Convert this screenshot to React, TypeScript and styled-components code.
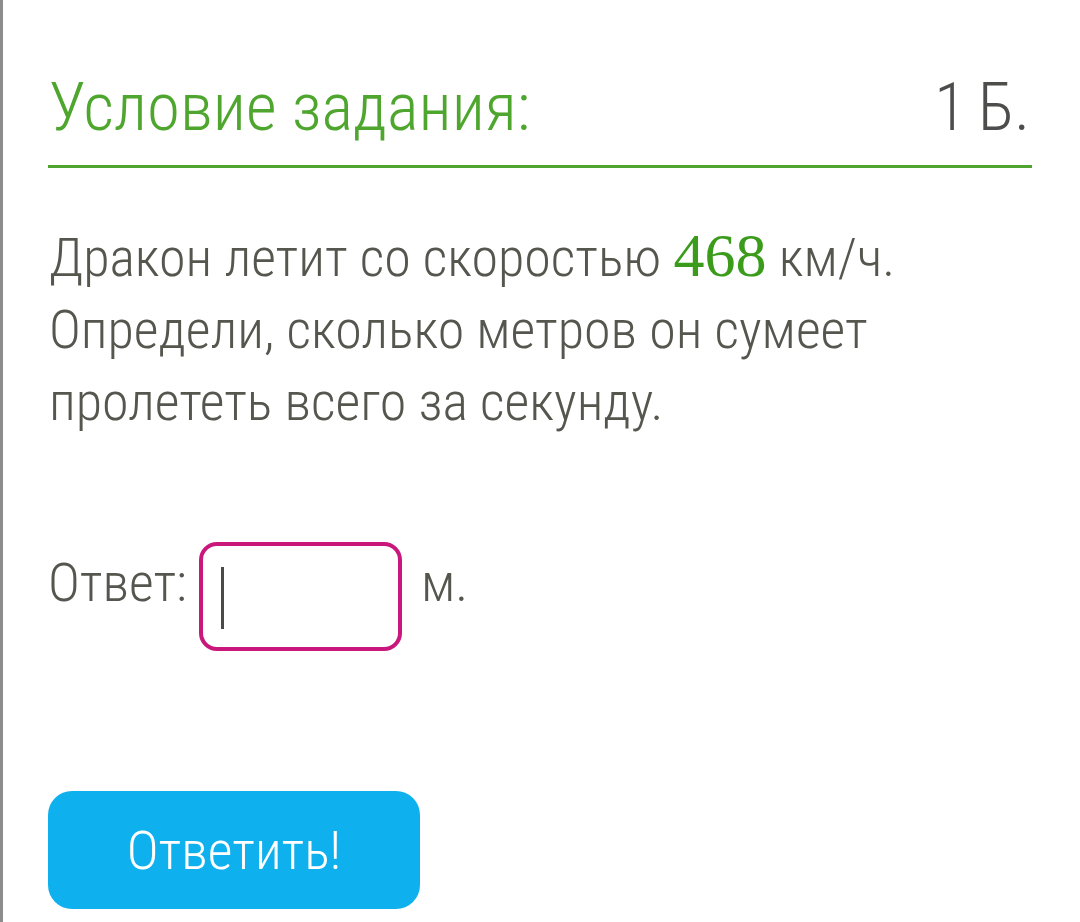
import styled, { createGlobalStyle } from "styled-components";

// style
const GlobalStyle = createGlobalStyle`
  html, body {
    margin: 0;
    padding: 0;
    background: #fff;
  }
  * {
    box-sizing: border-box;
  }
`;
const Page = styled.main`
  min-height: 922px;
  padding: 0 48px 0 45px;
  border-left: 3px solid #8c8c8c;
  font-family: "Roboto", "Noto Sans", sans-serif;
  font-stretch: condensed;
  font-weight: 300;
  color: #55574f;
  overflow: hidden;
`;
const Header = styled.header`
  display: flex;
  justify-content: space-between;
  align-items: baseline;
  padding: 73px 2px 23px 1px;
  border-bottom: 3px solid #4ea42c;
`;
const Title = styled.h1`
  margin: 0;
  font-size: 67px;
  line-height: 68px;
  font-weight: 300;
  color: #4fa62e;
`;
const Points = styled.span`
  font-size: 66px;
  line-height: 68px;
  word-spacing: -3px;
  color: #4d4d4b;
`;
const Task = styled.p`
  margin: 51px 0 0 1px;
  font-size: 54px;
  line-height: 72px;
`;
const Number = styled.span`
  font-family: "Liberation Serif", "Times New Roman", serif;
  font-stretch: normal;
  font-weight: 400;
  font-size: 62px;
  color: #3b9c1c;
`;
const AnswerRow = styled.div`
  display: flex;
  align-items: center;
  margin: 104px 0 0 0;
  font-size: 54px;
`;
const Label = styled.span<{ $gap: number }>`
  margin: 0 ${(p) => p.$gap}px 28px 0;
`;
const Field = styled.div`
  position: relative;
  width: 203px;
  height: 109px;
  margin-right: 19px;
  border: 4px solid #c9177c;
  border-radius: 18px;
`;
const Caret = styled.span`
  position: absolute;
  left: 18px;
  top: 21px;
  width: 3px;
  height: 62px;
  background: #4a4a46;
`;
const Button = styled.button`
  display: block;
  width: 372px;
  height: 118px;
  margin-top: 140px;
  border: none;
  border-radius: 24px;
  background: #0fb0ee;
  color: #fff;
  font-family: inherit;
  font-stretch: condensed;
  font-weight: 300;
  font-size: 54px;
  cursor: pointer;
`;

const App = () => {
  return (
    <>
      <GlobalStyle />
      <Page>
        <Header>
          <Title>Условие задания:</Title>
          <Points>1 Б.</Points>
        </Header>
        <Task>
          Дракон летит со скоростью <Number>468</Number> км/ч. Определи, сколько
          метров он сумеет пролететь всего за секунду.
        </Task>
        <AnswerRow>
          <Label $gap={12}>Ответ:</Label>
          <Field>
            <Caret />
          </Field>
          <Label $gap={0}>м.</Label>
        </AnswerRow>
        <Button>Ответить!</Button>
      </Page>
    </>
  );
};

export default App;
